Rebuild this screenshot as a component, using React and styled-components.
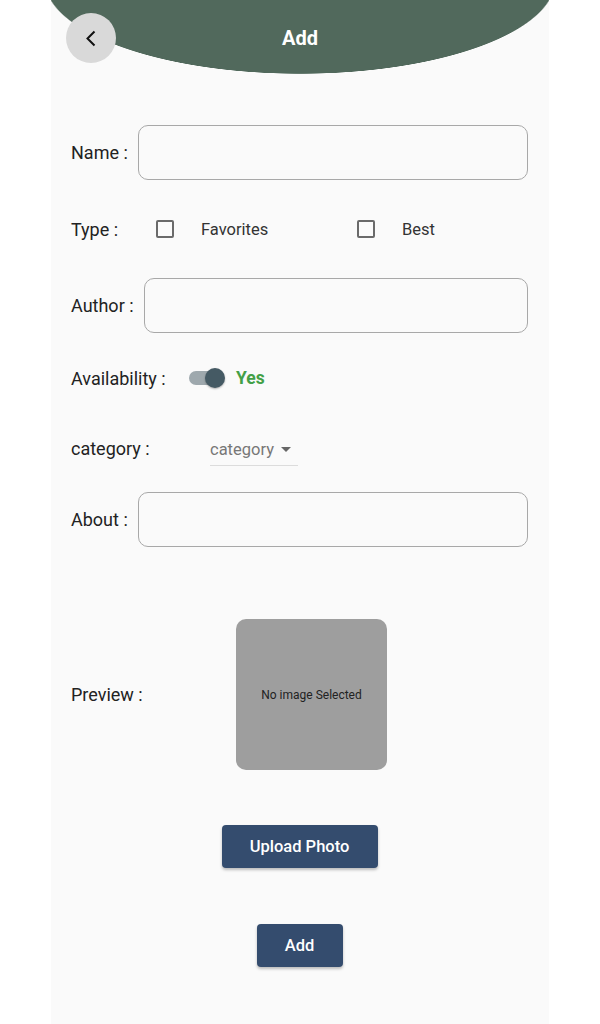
import React, { useState } from 'react'
import styled, { createGlobalStyle } from 'styled-components'

const GlobalStyle = createGlobalStyle`
    html, body {
        margin:0;
        padding:0;
        background:#ffffff;
        font-family:Roboto, "Liberation Sans", sans-serif;
    }
`

const Column = styled.div`
    width:498px;
    min-height:1024px;
    margin:0 auto;
    background:#fafafa;
    display:flex;
    flex-direction:column;
`

const Header = styled.header`
    height:74px;
    display:flex;
    align-items:center;
    justify-content:center;
    position:relative;
    background:radial-gradient(ellipse 256px 94px at 50% -20px, #51695c 99.4%, rgba(81,105,92,0) 100%);
`

const BackButton = styled.button`
    position:absolute;
    left:15px;
    top:13px;
    width:50px;
    height:50px;
    border:none;
    border-radius:50%;
    background:#d9d9d9;
    display:flex;
    align-items:center;
    justify-content:center;
    padding:0;
    cursor:pointer;
`

const Title = styled.h1`
    margin:0;
    color:#ffffff;
    font-size:20px;
    font-weight:700;
    padding-top:1px;
`

const Form = styled.form`
    display:flex;
    flex-direction:column;
    padding:0 21px 0 20px;
    margin-top:-1px;
`

const Row = styled.div`
    display:flex;
    align-items:center;
    margin-top:${p => p.top}px;
    height:${p => p.h}px;
    justify-content:${p => p.center ? 'center' : 'flex-start'};
`

const Label = styled.label`
    font-size:18px;
    color:#222;
    width:${p => p.w ? p.w + 'px' : 'auto'};
    flex-shrink:0;
    white-space:nowrap;
`

const TextBox = styled.input`
    flex:1;
    min-width:0;
    height:55px;
    box-sizing:border-box;
    margin-left:10px;
    border:1px solid #a8a8a8;
    border-radius:10px;
    background:#fafafa;
    font-size:16px;
    padding:0 12px;
    outline:none;
`

const Option = styled.div`
    width:201px;
    flex-shrink:0;
    display:flex;
    align-items:center;
`

const Check = styled.span`
    width:18px;
    height:18px;
    box-sizing:border-box;
    border:2px solid #6a6a6a;
    border-radius:2px;
    margin-right:27px;
`

const OptionText = styled.span`
    font-size:16.5px;
    color:#333;
`

const SwitchTrack = styled.div`
    width:28px;
    height:14px;
    border-radius:7px;
    background:#9ea8ad;
    position:relative;
    margin-right:19px;
    flex-shrink:0;
`

const SwitchKnob = styled.div`
    position:absolute;
    right:-8px;
    top:-3px;
    width:20px;
    height:20px;
    border-radius:50%;
    background:#455a64;
    box-shadow:0 1px 2px rgba(0,0,0,0.3);
`

const YesText = styled.span`
    color:#43a047;
    font-size:17.5px;
    font-weight:700;
`

const Dropdown = styled.div`
    width:88px;
    height:32px;
    box-sizing:border-box;
    border-bottom:1px solid #dcdcdc;
    display:flex;
    align-items:center;
    justify-content:space-between;
    margin-top:3px;
    color:#777;
    font-size:16.5px;
`

const Arrow = styled.span`
    width:0;
    height:0;
    border-left:5px solid transparent;
    border-right:5px solid transparent;
    border-top:5px solid #666;
    margin-right:7px;
`

const PreviewBox = styled.div`
    width:151px;
    height:151px;
    border-radius:10px;
    background:#9e9e9e;
    display:flex;
    align-items:center;
    justify-content:center;
    font-size:12px;
    color:#222;
`

const ActionButton = styled.button`
    height:43px;
    width:${p => p.w}px;
    border:none;
    border-radius:4px;
    background:#344c6e;
    color:#ffffff;
    font-family:Roboto, "Liberation Sans", sans-serif;
    font-size:16.5px;
    font-weight:500;
    box-shadow:0 2px 3px rgba(0,0,0,0.25);
    cursor:pointer;
`

export default function App() {
    const [available] = useState(true)

    return (
        <>
        <GlobalStyle />
        <Column>
            <Header>
                <BackButton aria-label='Back'>
                    <svg width="12" height="17" viewBox="0 0 12 17">
                        <path d="M9.5 1.5 L2.5 8.5 L9.5 15.5" fill="none" stroke="#111" strokeWidth="2" />
                    </svg>
                </BackButton>
                <Title>Add</Title>
            </Header>
            <Form onSubmit={e => e.preventDefault()}>
                <Row top={52} h={55}>
                    <Label>Name :</Label>
                    <TextBox type='text' />
                </Row>
                <Row top={34} h={30}>
                    <Label w={85}>Type :</Label>
                    <Option><Check /><OptionText>Favorites</OptionText></Option>
                    <Option><Check /><OptionText>Best</OptionText></Option>
                </Row>
                <Row top={34} h={55}>
                    <Label>Author :</Label>
                    <TextBox type='text' />
                </Row>
                <Row top={30} h={30}>
                    <Label w={118}>Availability :</Label>
                    <SwitchTrack><SwitchKnob /></SwitchTrack>
                    {available ? <YesText>Yes</YesText> : null}
                </Row>
                <Row top={37} h={36}>
                    <Label w={139}>category :</Label>
                    <Dropdown>category<Arrow /></Dropdown>
                </Row>
                <Row top={26} h={55}>
                    <Label>About :</Label>
                    <TextBox type='text' />
                </Row>
                <Row top={72} h={151}>
                    <Label w={165}>Preview :</Label>
                    <PreviewBox>No image Selected</PreviewBox>
                </Row>
                <Row top={55} h={43} center>
                    <ActionButton type='button' w={156}>Upload Photo</ActionButton>
                </Row>
                <Row top={56} h={43} center>
                    <ActionButton type='submit' w={86}>Add</ActionButton>
                </Row>
            </Form>
        </Column>
        </>
    )
}
